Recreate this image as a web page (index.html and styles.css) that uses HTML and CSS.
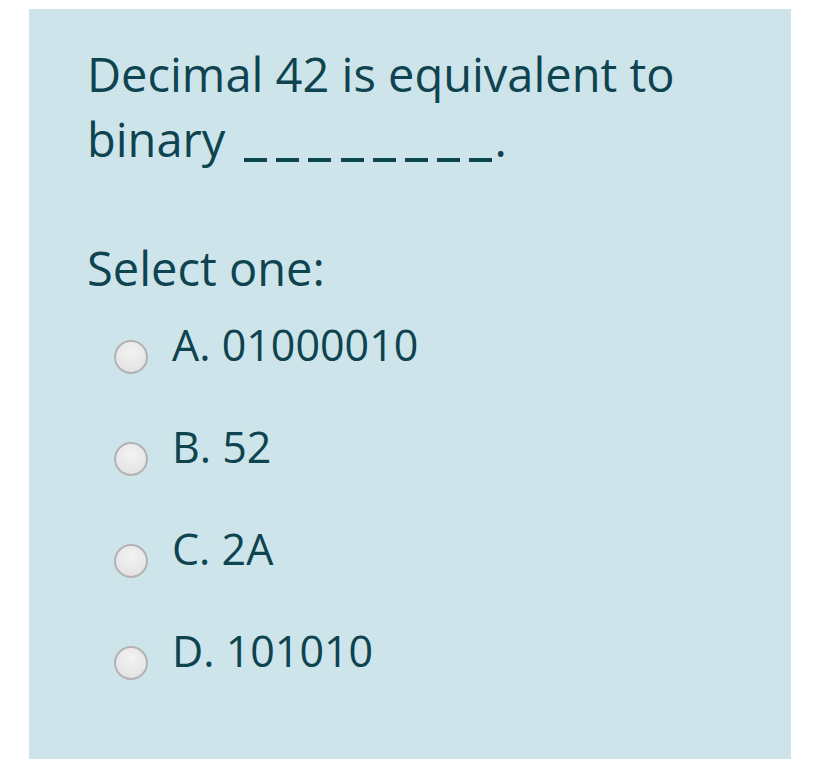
FILE: index.html
```html
<!DOCTYPE html>
<html lang="en">
<head>
<meta charset="utf-8">
<link rel="stylesheet" href="styles.css">
</head>
<body>
<div class="panel">
  <p class="question">Decimal 42 is equivalent to binary <span class="blank"></span><span class="dot">.</span></p>
  <p class="prompt">Select one:</p>
  <div class="options">
    <label class="option"><span class="radio"></span><span class="label">A. 01000010</span></label>
    <label class="option"><span class="radio"></span><span class="label">B. 52</span></label>
    <label class="option"><span class="radio"></span><span class="label">C. 2A</span></label>
    <label class="option"><span class="radio"></span><span class="label">D. 101010</span></label>
  </div>
</div>
</body>
</html>
```
FILE: styles.css
```css
html, body {
  margin: 0;
  padding: 0;
  background: #ffffff;
}
body {
  padding: 9px 0 0 29px;
  font-family: "Open Sans", "Liberation Sans", sans-serif;
  color: #0e4350;
}
.panel {
  width: 762px;
  height: 750px;
  box-sizing: border-box;
  background: #cde5ea;
  padding: 33px 0 0 58px;
}
.question {
  margin: 0;
  width: 640px;
  font-size: 47px;
  line-height: 65px;
}
.blank {
  display: inline-block;
  width: 248px;
  height: 4px;
  margin-left: 6px;
  vertical-align: -5px;
  background: repeating-linear-gradient(to right, #0e4350 0 23px, transparent 23px 32.2px);
}
.dot {
  margin-left: 3px;
}
.prompt {
  margin: 64px 0 0;
  font-size: 47px;
  line-height: 65px;
}
.options {
  display: flex;
  flex-direction: column;
  gap: 48px;
  margin-top: 17px;
  padding-left: 27px;
}
.option {
  display: flex;
  align-items: flex-start;
  gap: 24px;
  height: 54px;
  font-size: 43px;
}
.radio {
  flex: none;
  width: 30px;
  height: 30px;
  border-radius: 50%;
  border: 2px solid #b3b3b3;
  background: radial-gradient(circle at 50% 35%, #f3f3f3 0%, #e2e2e2 85%);
  margin-top: 22px;
}
.label {
  line-height: 54px;
}
```
